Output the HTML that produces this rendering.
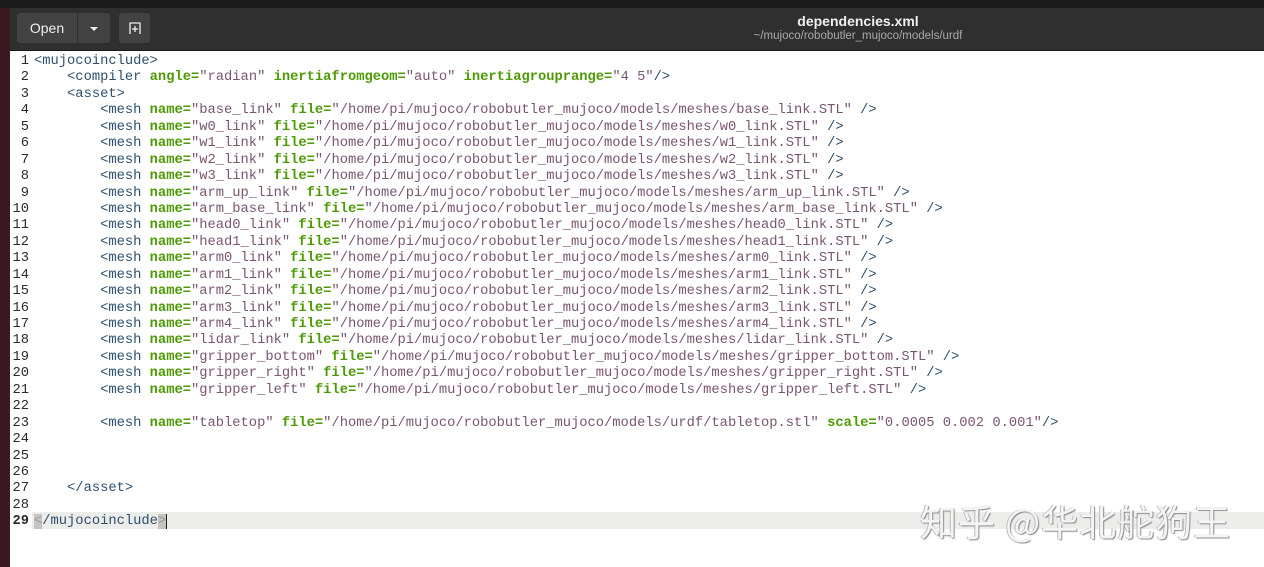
<!DOCTYPE html>
<html><head><meta charset="utf-8">
<style>
html,body{margin:0;padding:0;width:1264px;height:567px;overflow:hidden;background:#fff;font-family:"Liberation Sans","DejaVu Sans",sans-serif}
#top{position:absolute;left:0;top:0;width:1264px;height:8px;background:#1b1b1b}
#hdr{position:absolute;left:0;top:8px;width:1264px;height:42px;background:#2f2f2f;border-bottom:1px solid #1a1a1a}
#side{position:absolute;left:0;top:8px;width:10px;height:559px;background:#3a1a20}
.btn{position:absolute;top:13px;height:30px;background:#424242;border-radius:3px;color:#eee;font-size:14px;line-height:30px;text-align:center}
#title{position:absolute;left:700px;width:316px;top:13px;text-align:center;color:#f0f0f0;font-weight:bold;font-size:14px}
#path{position:absolute;left:700px;width:316px;top:30px;text-align:center;color:#aaa;font-size:11.5px}
#ed{position:absolute;left:10px;top:51px;width:1254px;height:516px;background:#fff}
#gut{position:absolute;left:10px;top:51px;width:22px;height:516px;background:#fff}
#hl{position:absolute;left:32px;top:512px;width:1232px;height:17px;background:#ececea}
pre{margin:0;position:absolute;top:54px;font-family:"Liberation Mono","DejaVu Sans Mono",monospace;font-size:13.78px;line-height:16.43px;color:#2e4a66}
#nums{left:12px;width:17px;text-align:right;color:#2b2b2b}
#code{left:34px}
.t{color:#2e4f6e}.a{color:#4e9a06;font-weight:bold}.v{color:#7a5570}.e{color:#333}
#wm{position:absolute;left:920px;top:493px;font-family:"Noto Sans CJK SC",sans-serif;font-size:37px;color:#f4f4f4;text-shadow:1px 1px 1px #8a8a8a,-1px 0 0 #bbb;letter-spacing:1px}
</style></head><body>
<div id="top"></div>
<div id="hdr"></div>
<div id="side"></div>
<div class="btn" style="left:17px;width:60px;border-radius:3px 0 0 3px">Open</div>
<div class="btn" style="left:78px;width:32px;border-radius:0 3px 3px 0"><svg width="12" height="8" viewBox="0 0 12 8" style="margin-top:11px"><path d="M2 2h8l-4 4z" fill="#eee"/></svg></div>
<div class="btn" style="left:119px;width:31px"><svg width="14" height="14" viewBox="0 0 14 14" style="margin-top:8px"><path d="M2 13V2h10v11M7 5v6M4 8h6" stroke="#eee" stroke-width="1.3" fill="none"/></svg></div>
<div id="title">dependencies.xml</div>
<div id="path">~/mujoco/robobutler_mujoco/models/urdf</div>
<div id="ed"></div>
<div id="gut"></div>
<div id="hl"></div>
<pre id="nums">1
2
3
4
5
6
7
8
9
10
11
12
13
14
15
16
17
18
19
20
21
22
23
24
25
26
27
28
<b>29</b></pre>
<pre id="code"><span class="t">&lt;mujocoinclude&gt;</span>
    <span class="t">&lt;compiler</span> <span class="a">angle=</span><span class="v">"radian"</span> <span class="a">inertiafromgeom=</span><span class="v">"auto"</span> <span class="a">inertiagrouprange=</span><span class="v">"4 5"</span><span class="t">/&gt;</span>
    <span class="t">&lt;asset&gt;</span>
        <span class="t">&lt;mesh</span> <span class="a">name=</span><span class="v">"base_link"</span> <span class="a">file=</span><span class="v">"/home/pi/mujoco/robobutler_mujoco/models/meshes/base_link.STL"</span> <span class="t">/&gt;</span>
        <span class="t">&lt;mesh</span> <span class="a">name=</span><span class="v">"w0_link"</span> <span class="a">file=</span><span class="v">"/home/pi/mujoco/robobutler_mujoco/models/meshes/w0_link.STL"</span> <span class="t">/&gt;</span>
        <span class="t">&lt;mesh</span> <span class="a">name=</span><span class="v">"w1_link"</span> <span class="a">file=</span><span class="v">"/home/pi/mujoco/robobutler_mujoco/models/meshes/w1_link.STL"</span> <span class="t">/&gt;</span>
        <span class="t">&lt;mesh</span> <span class="a">name=</span><span class="v">"w2_link"</span> <span class="a">file=</span><span class="v">"/home/pi/mujoco/robobutler_mujoco/models/meshes/w2_link.STL"</span> <span class="t">/&gt;</span>
        <span class="t">&lt;mesh</span> <span class="a">name=</span><span class="v">"w3_link"</span> <span class="a">file=</span><span class="v">"/home/pi/mujoco/robobutler_mujoco/models/meshes/w3_link.STL"</span> <span class="t">/&gt;</span>
        <span class="t">&lt;mesh</span> <span class="a">name=</span><span class="v">"arm_up_link"</span> <span class="a">file=</span><span class="v">"/home/pi/mujoco/robobutler_mujoco/models/meshes/arm_up_link.STL"</span> <span class="t">/&gt;</span>
        <span class="t">&lt;mesh</span> <span class="a">name=</span><span class="v">"arm_base_link"</span> <span class="a">file=</span><span class="v">"/home/pi/mujoco/robobutler_mujoco/models/meshes/arm_base_link.STL"</span> <span class="t">/&gt;</span>
        <span class="t">&lt;mesh</span> <span class="a">name=</span><span class="v">"head0_link"</span> <span class="a">file=</span><span class="v">"/home/pi/mujoco/robobutler_mujoco/models/meshes/head0_link.STL"</span> <span class="t">/&gt;</span>
        <span class="t">&lt;mesh</span> <span class="a">name=</span><span class="v">"head1_link"</span> <span class="a">file=</span><span class="v">"/home/pi/mujoco/robobutler_mujoco/models/meshes/head1_link.STL"</span> <span class="t">/&gt;</span>
        <span class="t">&lt;mesh</span> <span class="a">name=</span><span class="v">"arm0_link"</span> <span class="a">file=</span><span class="v">"/home/pi/mujoco/robobutler_mujoco/models/meshes/arm0_link.STL"</span> <span class="t">/&gt;</span>
        <span class="t">&lt;mesh</span> <span class="a">name=</span><span class="v">"arm1_link"</span> <span class="a">file=</span><span class="v">"/home/pi/mujoco/robobutler_mujoco/models/meshes/arm1_link.STL"</span> <span class="t">/&gt;</span>
        <span class="t">&lt;mesh</span> <span class="a">name=</span><span class="v">"arm2_link"</span> <span class="a">file=</span><span class="v">"/home/pi/mujoco/robobutler_mujoco/models/meshes/arm2_link.STL"</span> <span class="t">/&gt;</span>
        <span class="t">&lt;mesh</span> <span class="a">name=</span><span class="v">"arm3_link"</span> <span class="a">file=</span><span class="v">"/home/pi/mujoco/robobutler_mujoco/models/meshes/arm3_link.STL"</span> <span class="t">/&gt;</span>
        <span class="t">&lt;mesh</span> <span class="a">name=</span><span class="v">"arm4_link"</span> <span class="a">file=</span><span class="v">"/home/pi/mujoco/robobutler_mujoco/models/meshes/arm4_link.STL"</span> <span class="t">/&gt;</span>
        <span class="t">&lt;mesh</span> <span class="a">name=</span><span class="v">"lidar_link"</span> <span class="a">file=</span><span class="v">"/home/pi/mujoco/robobutler_mujoco/models/meshes/lidar_link.STL"</span> <span class="t">/&gt;</span>
        <span class="t">&lt;mesh</span> <span class="a">name=</span><span class="v">"gripper_bottom"</span> <span class="a">file=</span><span class="v">"/home/pi/mujoco/robobutler_mujoco/models/meshes/gripper_bottom.STL"</span> <span class="t">/&gt;</span>
        <span class="t">&lt;mesh</span> <span class="a">name=</span><span class="v">"gripper_right"</span> <span class="a">file=</span><span class="v">"/home/pi/mujoco/robobutler_mujoco/models/meshes/gripper_right.STL"</span> <span class="t">/&gt;</span>
        <span class="t">&lt;mesh</span> <span class="a">name=</span><span class="v">"gripper_left"</span> <span class="a">file=</span><span class="v">"/home/pi/mujoco/robobutler_mujoco/models/meshes/gripper_left.STL"</span> <span class="t">/&gt;</span>

        <span class="t">&lt;mesh</span> <span class="a">name=</span><span class="v">"tabletop"</span> <span class="a">file=</span><span class="v">"/home/pi/mujoco/robobutler_mujoco/models/urdf/tabletop.stl"</span> <span class="a">scale=</span><span class="v">"0.0005 0.002 0.001"</span><span class="t">/&gt;</span>



    <span class="t">&lt;/asset&gt;</span>

<span style="background:#c4c4c2;color:#999">&lt;</span><span class="t">/mujocoinclude</span><span style="background:#c4c4c2;color:#999">&gt;</span><span style="border-left:1px solid #222"></span></pre>
<div id="wm">知乎 @华北舵狗王</div>
</body></html>
